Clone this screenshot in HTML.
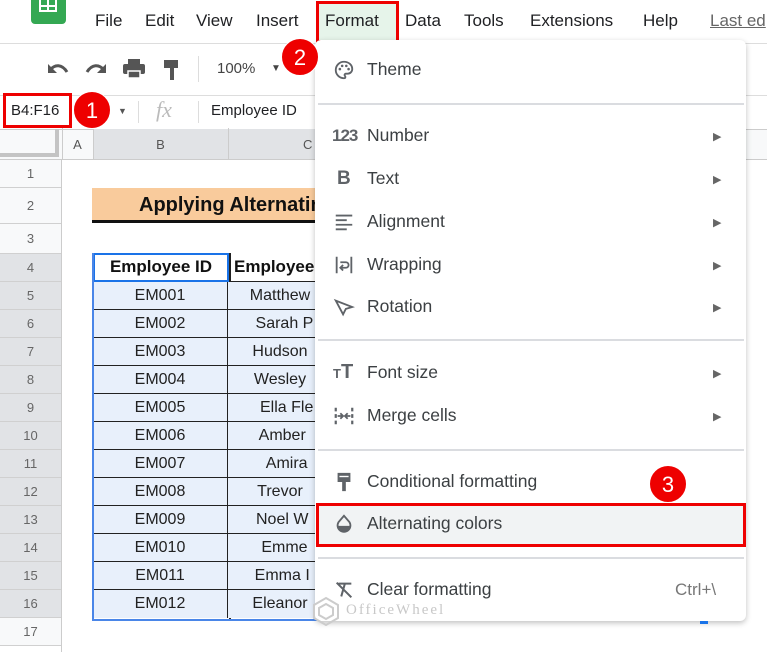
<!DOCTYPE html>
<html><head><style>
*{margin:0;padding:0;box-sizing:border-box}
body{width:767px;height:652px;overflow:hidden;background:#fff;font-family:"Liberation Sans",Arial,sans-serif;position:relative}
.a{position:absolute}
.menu-t{font-size:17px;color:#202124;top:11px}
.circ{position:absolute;width:38px;height:38px;border-radius:50%;background:#e00;color:#fff;font-size:22px;text-align:center;line-height:38px;border:1px solid #fff}
.rh{position:absolute;left:0;width:61px;text-align:center;font-size:13px;color:#666;border-bottom:1px solid #d0d0d0;background:#f8f9fa}
.row{position:absolute;left:93px;width:240px;height:28px;border-bottom:1.5px solid #222;background:#e8f0fb;font-size:16px;color:#222}
.row .b{position:absolute;left:0;width:135px;text-align:center;line-height:28px;border-right:1.5px solid #222;height:28px}
.row .c{position:absolute;left:137px;line-height:28px;width:100px;text-align:center}
.mi{position:absolute;left:367px;font-size:17.5px;color:#3c4043}
.ar{position:absolute;left:713px;font-size:11px;color:#666}
.sep{position:absolute;left:318px;width:426px;height:1.5px;background:#dadce0}
.ic{position:absolute;left:333px}
</style></head><body>
<!-- menu bar -->
<div class="a" style="left:31px;top:-8px;width:35px;height:32px;background:#34a853;border-radius:4px"></div>
<div class="a" style="left:39px;top:-4px;width:18px;height:16px;border:2px solid #fff;border-top:none"></div>
<div class="a" style="left:39px;top:5px;width:18px;height:2px;background:#fff"></div>
<div class="a" style="left:47px;top:-4px;width:2px;height:16px;background:#fff"></div>
<div class="a menu-t" style="left:95px">File</div>
<div class="a menu-t" style="left:145px">Edit</div>
<div class="a menu-t" style="left:196px">View</div>
<div class="a menu-t" style="left:256px">Insert</div>
<div class="a" style="left:316px;top:1px;width:83px;height:42px;background:#e6f4ea;border:3px solid #e00"></div>
<div class="a menu-t" style="left:325px">Format</div>
<div class="a menu-t" style="left:405px">Data</div>
<div class="a menu-t" style="left:464px">Tools</div>
<div class="a menu-t" style="left:530px">Extensions</div>
<div class="a menu-t" style="left:643px">Help</div>
<div class="a menu-t" style="left:710px;color:#666;text-decoration:underline">Last ed</div>
<div class="a" style="left:0;top:43px;width:767px;height:1px;background:#ddd"></div>
<!-- toolbar -->
<svg class="a" style="left:46px;top:60px" width="24" height="20" viewBox="0 0 24 20"><path d="M4 10c5-6 12-6 17 2" fill="none" stroke="#555" stroke-width="3"/><path d="M2 4v9h9z" fill="#555"/></svg>
<svg class="a" style="left:84px;top:60px" width="24" height="20" viewBox="0 0 24 20"><path d="M20 10c-5-6-12-6-17 2" fill="none" stroke="#555" stroke-width="3"/><path d="M22 4v9h-9z" fill="#555"/></svg>
<svg class="a" style="left:122px;top:58px" width="24" height="22" viewBox="0 0 24 22"><rect x="6" y="1" width="12" height="5" fill="#555"/><rect x="1" y="6" width="22" height="10" rx="2" fill="#555"/><rect x="6" y="13" width="12" height="7" fill="#555" stroke="#fff" stroke-width="1.5"/></svg>
<div class="a" style="left:164px;top:60px;width:14px;height:8px;background:#555"></div>
<div class="a" style="left:170px;top:68px;width:4px;height:12px;background:#555"></div>
<div class="a" style="left:198px;top:56px;width:1px;height:26px;background:#ddd"></div>
<div class="a" style="left:217px;top:60px;font-size:15px;color:#444">100%</div>
<div class="a" style="left:271px;top:63px;font-size:10px;color:#444">▼</div>
<div class="a" style="left:0;top:95px;width:767px;height:1px;background:#ddd"></div>
<!-- formula bar -->
<div class="a" style="left:3px;top:93px;width:69px;height:35px;border:3px solid #e00;background:#fff"></div>
<div class="a" style="left:11px;top:102px;font-size:15px;color:#202124">B4:F16</div>
<div class="a" style="left:118px;top:106px;font-size:9px;color:#555">▼</div>
<div class="a" style="left:138px;top:101px;width:1px;height:22px;background:#ddd"></div>
<div class="a" style="left:156px;top:97px;font-size:22px;color:#bbb;font-family:'Liberation Serif',serif;font-style:italic">fx</div>
<div class="a" style="left:198px;top:101px;width:1px;height:22px;background:#ddd"></div>
<div class="a" style="left:211px;top:102px;font-size:15px;color:#202124">Employee ID</div>
<!-- col headers -->
<div class="a" style="left:0;top:129px;width:767px;height:31px;background:#f8f9fa;border-bottom:1px solid #ccc;border-top:1px solid #ccc"></div>
<div class="a" style="left:55px;top:129px;width:4px;height:27px;background:#c4c4c4"></div>
<div class="a" style="left:0;top:153px;width:59px;height:4px;background:#c4c4c4"></div>
<div class="a" style="left:62px;top:128px;width:1px;height:32px;background:#ccc"></div>
<div class="a" style="left:62px;top:137px;width:31px;text-align:center;font-size:13px;color:#555">A</div>
<div class="a" style="left:93px;top:129px;width:224px;height:31px;background:#e1e3e6;border-left:1px solid #ccc;border-bottom:1px solid #ccc"></div>
<div class="a" style="left:228px;top:128px;width:1px;height:32px;background:#ccc"></div>
<div class="a" style="left:93px;top:137px;width:135px;text-align:center;font-size:13px;color:#555">B</div>
<div class="a" style="left:303px;top:137px;font-size:13px;color:#555">C</div>
<div class="a" style="left:61px;top:160px;width:1px;height:492px;background:#ccc"></div>
<!-- row headers -->
<div class="rh" style="top:160px;height:28px;line-height:28px">1</div>
<div class="rh" style="top:188px;height:36px;line-height:36px">2</div>
<div class="rh" style="top:224px;height:30px;line-height:30px">3</div>
<div class="rh" style="top:254px;height:28px;line-height:28px;background:#e1e3e6">4</div>
<div class="rh" style="top:282px;height:28px;line-height:28px;background:#e1e3e6">5</div>
<div class="rh" style="top:310px;height:28px;line-height:28px;background:#e1e3e6">6</div>
<div class="rh" style="top:338px;height:28px;line-height:28px;background:#e1e3e6">7</div>
<div class="rh" style="top:366px;height:28px;line-height:28px;background:#e1e3e6">8</div>
<div class="rh" style="top:394px;height:28px;line-height:28px;background:#e1e3e6">9</div>
<div class="rh" style="top:422px;height:28px;line-height:28px;background:#e1e3e6">10</div>
<div class="rh" style="top:450px;height:28px;line-height:28px;background:#e1e3e6">11</div>
<div class="rh" style="top:478px;height:28px;line-height:28px;background:#e1e3e6">12</div>
<div class="rh" style="top:506px;height:28px;line-height:28px;background:#e1e3e6">13</div>
<div class="rh" style="top:534px;height:28px;line-height:28px;background:#e1e3e6">14</div>
<div class="rh" style="top:562px;height:28px;line-height:28px;background:#e1e3e6">15</div>
<div class="rh" style="top:590px;height:28px;line-height:28px;background:#e1e3e6">16</div>
<div class="rh" style="top:618px;height:28px;line-height:28px">17</div>
<!-- title -->
<div class="a" style="left:92px;top:188px;width:230px;height:35px;background:#f9cb9c;border-bottom:3px solid #111"></div>
<div class="a" style="left:139px;top:194px;font-size:20px;font-weight:bold;color:#111;white-space:nowrap">Applying Alternating</div>
<!-- table -->
<div class="a" style="left:93px;top:253px;width:240px;height:29px;background:#fff;border-bottom:1.5px solid #222"></div>
<div class="a" style="left:93px;top:253px;width:136px;height:29px;border:2px solid #1a73e8"></div>
<div class="a" style="left:93px;top:257px;width:136px;text-align:center;font-size:17px;font-weight:bold;color:#111">Employee ID</div>
<div class="a" style="left:229px;top:253px;width:1.5px;height:367px;background:#222"></div>
<div class="a" style="left:234px;top:257px;font-size:17px;font-weight:bold;color:#111;white-space:nowrap">Employee</div>
<div class="row" style="top:282px"><div class="b">EM001</div><div class="c">Matthew</div></div>
<div class="row" style="top:310px"><div class="b">EM002</div><div class="c">&nbsp;&nbsp;Sarah P</div></div>
<div class="row" style="top:338px"><div class="b">EM003</div><div class="c">Hudson</div></div>
<div class="row" style="top:366px"><div class="b">EM004</div><div class="c">Wesley</div></div>
<div class="row" style="top:394px"><div class="b">EM005</div><div class="c">&nbsp;&nbsp;&nbsp;Ella Fle</div></div>
<div class="row" style="top:422px"><div class="b">EM006</div><div class="c">&nbsp;Amber</div></div>
<div class="row" style="top:450px"><div class="b">EM007</div><div class="c">&nbsp;&nbsp;&nbsp;Amira</div></div>
<div class="row" style="top:478px"><div class="b">EM008</div><div class="c">Trevor</div></div>
<div class="row" style="top:506px"><div class="b">EM009</div><div class="c">&nbsp;Noel W</div></div>
<div class="row" style="top:534px"><div class="b">EM010</div><div class="c">&nbsp;&nbsp;Emme</div></div>
<div class="row" style="top:562px"><div class="b">EM011</div><div class="c">&nbsp;Emma I</div></div>
<div class="row" style="top:590px;border-bottom:none"><div class="b">EM012</div><div class="c">Eleanor</div></div>
<div class="a" style="left:92px;top:253px;width:2px;height:367px;background:#4a86e8"></div>
<div class="a" style="left:92px;top:619px;width:230px;height:2px;background:#4a86e8"></div>
<!-- dropdown menu -->
<div class="a" style="left:315px;top:40px;width:431px;height:581px;background:#fff;border-radius:6px;box-shadow:0 2px 6px rgba(0,0,0,.25)"></div>
<svg class="ic" style="top:59px" width="22" height="22" viewBox="0 0 24 24"><path d="M12 3a9 9 0 0 0 0 18c1 0 1.5-.7 1.5-1.5 0-.5-.3-.8-.5-1.1-.2-.3-.4-.6-.4-1 0-.8.7-1.4 1.5-1.4H16a5 5 0 0 0 5-5C21 6.5 17 3 12 3z" fill="none" stroke="#5f6368" stroke-width="2"/><circle cx="7.5" cy="11" r="1.4" fill="#5f6368"/><circle cx="10" cy="7.5" r="1.4" fill="#5f6368"/><circle cx="14.5" cy="7.5" r="1.4" fill="#5f6368"/><circle cx="17" cy="11" r="1.4" fill="#5f6368"/></svg>
<div class="mi" style="top:59px">Theme</div>
<div class="sep" style="top:103px"></div>
<div class="a" style="left:332px;top:126px;font-size:17px;font-weight:bold;color:#5f6368;letter-spacing:-1px">123</div>
<div class="mi" style="top:125px">Number</div><div class="ar" style="top:130px">▶</div>
<div class="a" style="left:337px;top:168px;font-size:19px;font-weight:bold;color:#5f6368">B</div>
<div class="mi" style="top:168px">Text</div><div class="ar" style="top:173px">▶</div>
<svg class="ic" style="top:211px" width="22" height="22" viewBox="0 0 24 24"><path d="M3 5h18M3 10h12M3 15h18M3 20h12" stroke="#5f6368" stroke-width="2"/></svg>
<div class="mi" style="top:211px">Alignment</div><div class="ar" style="top:216px">▶</div>
<svg class="ic" style="top:254px" width="22" height="22" viewBox="0 0 24 24"><path d="M4 3v18M20 3v18M8 9h6a3 3 0 0 1 0 6H9m2-3-3 3 3 3" fill="none" stroke="#5f6368" stroke-width="2"/></svg>
<div class="mi" style="top:254px">Wrapping</div><div class="ar" style="top:259px">▶</div>
<svg class="ic" style="top:296px" width="22" height="22" viewBox="0 0 24 24"><path d="M3 5l8 15 3-6 7-2z" fill="none" stroke="#5f6368" stroke-width="2"/></svg>
<div class="mi" style="top:296px">Rotation</div><div class="ar" style="top:301px">▶</div>
<div class="sep" style="top:339px"></div>
<div class="a" style="left:333px;top:361px;font-size:20px;font-weight:bold;color:#5f6368"><span style="font-size:13px">T</span>T</div>
<div class="mi" style="top:362px">Font size</div><div class="ar" style="top:367px">▶</div>
<svg class="ic" style="top:405px" width="22" height="22" viewBox="0 0 24 24"><path d="M3 3v4M3 10v4M3 17v4M21 3v4M21 10v4M21 17v4" stroke="#5f6368" stroke-width="2.4"/><path d="M5 12h5m-2-3 3 3-3 3M19 12h-5m2-3-3 3 3 3" fill="none" stroke="#5f6368" stroke-width="2"/></svg>
<div class="mi" style="top:405px">Merge cells</div><div class="ar" style="top:410px">▶</div>
<div class="sep" style="top:449px"></div>
<svg class="ic" style="top:471px" width="22" height="22" viewBox="0 0 24 24"><path d="M5 2h14v10H5zM10 12h4v10h-4z" fill="#5f6368"/><path d="M7 6h10" stroke="#fff" stroke-width="1.5"/></svg>
<div class="mi" style="top:471px">Conditional formatting</div>
<div class="a" style="left:316px;top:503px;width:430px;height:44px;background:#f1f3f4;border:3px solid #e00"></div>
<svg class="ic" style="top:513px" width="22" height="22" viewBox="0 0 24 24"><path d="M12 3 6 10a7 7 0 1 0 12 0z" fill="none" stroke="#5f6368" stroke-width="2"/><path d="M5 14h14a7 7 0 0 1-14 0z" fill="#5f6368"/></svg>
<div class="mi" style="top:513px">Alternating colors</div>
<div class="sep" style="top:557px"></div>
<svg class="ic" style="top:579px" width="22" height="22" viewBox="0 0 24 24"><path d="M4 4l16 16M6 5h14M13 5l-4 14" fill="none" stroke="#5f6368" stroke-width="2.2"/></svg>
<div class="mi" style="top:579px">Clear formatting</div>
<div class="a" style="left:675px;top:580px;font-size:17px;color:#777">Ctrl+\</div>
<div class="a" style="left:700px;top:621px;width:8px;height:3px;background:#1a73e8"></div>
<!-- watermark -->
<svg class="a" style="left:312px;top:596px" width="28" height="30" viewBox="0 0 28 30"><path d="M14 2 26 9v13l-12 7L2 22V9z" fill="none" stroke="#ccc" stroke-width="2"/><path d="M14 8l7 4v7l-7 4-7-4v-7z" fill="none" stroke="#ccc" stroke-width="2"/></svg>
<div class="a" style="left:346px;top:602px;font-size:15px;letter-spacing:2px;color:#c8c8c8;font-family:'Liberation Serif',serif">OfficeWheel</div>
<!-- circles -->
<div class="circ" style="left:73px;top:91px">1</div>
<div class="circ" style="left:281px;top:38px">2</div>
<div class="circ" style="left:649px;top:465px">3</div>
</body></html>
